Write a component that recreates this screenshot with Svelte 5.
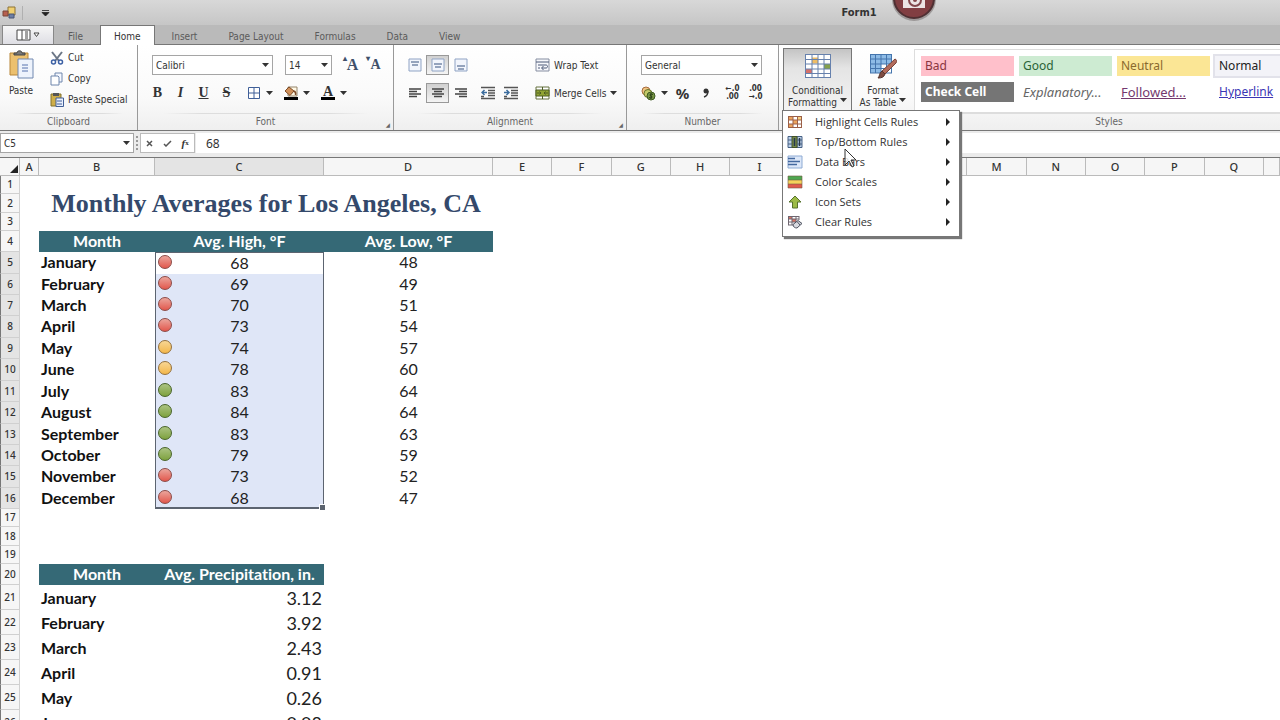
<script lang="ts">
  interface Row {
    n: number;
    h: number;
    kind?: string;
    b?: string;
    c?: string;
    d?: string;
    dot?: string;
  }

  const tabs = ['File', 'Home', 'Insert', 'Page Layout', 'Formulas', 'Data', 'View'];
  const columns = 'ABCDEFGHIJKLMNOPQR'.split('');
  const spare = columns.slice(4);

  const rows: Row[] = [
    { n: 1, h: 18 },
    { n: 2, h: 19, kind: 'title', b: 'Monthly Averages for Los Angeles, CA' },
    { n: 3, h: 18 },
    { n: 4, h: 21, kind: 'head', b: 'Month', c: 'Avg. High, °F', d: 'Avg. Low, °F' },
    { n: 5, h: 22, kind: 'temp', b: 'January', c: '68', d: '48', dot: 'red' },
    { n: 6, h: 21, kind: 'temp', b: 'February', c: '69', d: '49', dot: 'red' },
    { n: 7, h: 21, kind: 'temp', b: 'March', c: '70', d: '51', dot: 'red' },
    { n: 8, h: 22, kind: 'temp', b: 'April', c: '73', d: '54', dot: 'red' },
    { n: 9, h: 21, kind: 'temp', b: 'May', c: '74', d: '57', dot: 'yellow' },
    { n: 10, h: 22, kind: 'temp', b: 'June', c: '78', d: '60', dot: 'yellow' },
    { n: 11, h: 21, kind: 'temp', b: 'July', c: '83', d: '64', dot: 'green' },
    { n: 12, h: 22, kind: 'temp', b: 'August', c: '84', d: '64', dot: 'green' },
    { n: 13, h: 21, kind: 'temp', b: 'September', c: '83', d: '63', dot: 'green' },
    { n: 14, h: 21, kind: 'temp', b: 'October', c: '79', d: '59', dot: 'green' },
    { n: 15, h: 22, kind: 'temp', b: 'November', c: '73', d: '52', dot: 'red' },
    { n: 16, h: 21, kind: 'temp', b: 'December', c: '68', d: '47', dot: 'red' },
    { n: 17, h: 18 },
    { n: 18, h: 19 },
    { n: 19, h: 18 },
    { n: 20, h: 21, kind: 'head', b: 'Month', c: 'Avg. Precipitation, in.' },
    { n: 21, h: 25, kind: 'rain', b: 'January', c: '3.12' },
    { n: 22, h: 25, kind: 'rain', b: 'February', c: '3.92' },
    { n: 23, h: 25, kind: 'rain', b: 'March', c: '2.43' },
    { n: 24, h: 25, kind: 'rain', b: 'April', c: '0.91' },
    { n: 25, h: 25, kind: 'rain', b: 'May', c: '0.26' },
    { n: 26, h: 25, kind: 'rain', b: 'June', c: '0.08' }
  ];

  const menu = ['Highlight Cells Rules', 'Top/Bottom Rules', 'Data Bars', 'Color Scales', 'Icon Sets', 'Clear Rules'];
  const styles = [
    ['Bad', 'bad'], ['Good', 'good'], ['Neutral', 'neutral'], ['Normal', 'normal'],
    ['Check Cell', 'check'], ['Explanatory...', 'explain'], ['Followed...', 'followed'], ['Hyperlink', 'link']
  ];

  let activeTab = $state('Home');
  let menuOpen = $state(true);
  let fontName = $state('Calibri');
  let fontSize = $state('14');
  let format = $state('General');
  let cellName = $state('C5');
  let formula = $state('68');
</script>

{#snippet arrow()}
  <svg class="arrow" width="7" height="4" viewBox="0 0 7 4"><path d="M0 0h7L3.500 4z" fill="#333" /></svg>
{/snippet}

{#snippet lines(kind: string)}
  <svg width="14" height="14" viewBox="0 0 14 14">
    {#if kind === 'left'}
      <path d="M1 3h12M1 5.500h8M1 8h12M1 10.500h8" stroke="#444" stroke-width="1.500" />
    {:else if kind === 'center'}
      <path d="M1 3h12M3 5.500h8M1 8h12M3 10.500h8" stroke="#444" stroke-width="1.500" />
    {:else if kind === 'right'}
      <path d="M1 3h12M5 5.500h8M1 8h12M5 10.500h8" stroke="#444" stroke-width="1.500" />
    {:else}
      <path d="M0 1.500h14M7 4.500h7M7 7h7M7 9.500h7M0 12.500h14M0 10.500h3" stroke="#555" stroke-width="1.500" />
      <path d={kind === 'outdent' ? 'M6 6.500H1M3.500 4L1 6.500L3.500 9' : 'M0 6.500h5M2.500 4L5 6.500L2.500 9'} stroke="#3c6d9e" stroke-width="1.500" fill="none" />
    {/if}
  </svg>
{/snippet}

{#snippet valign(y: number)}
  <svg width="14" height="14" viewBox="0 0 14 14">
    <path d="M1 1h12v12H1z" fill="#f2f5fc" stroke="#8fa3c4" />
    <path d="M3 {y}h8M4 {y + 3}h6" stroke="#39527e" />
  </svg>
{/snippet}

{#snippet menuIcon(i: number)}
  <svg width="16" height="14" viewBox="0 0 16 14">
    {#if i === 0}
      <path d="M1 1h14v12H1z" fill="#fff" />
      <path d="M1 1h5v4H1zM6 5h5v4H6zM1 9h5v4H1z" fill="#eda45c" />
      <path d="M11 1h4v4h-4z" fill="#f7cf7d" />
      <path d="M1 1.500h14M1 5h14M1 9h14M1 12.500h14M1.500 1v12M6 1v12M10.500 1v12M14.500 1v12" stroke="#9b6048" />
    {:else if i === 1}
      <path d="M1 1.500h5v11H1zM10 1.500h5v11h-5z" fill="#bdd0e8" stroke="#466084" />
      <path d="M5 1.500h5v11H5z" fill="#74884b" stroke="#435329" />
      <path d="M1 5h4M1 9h4M10 5h5M10 9h5" stroke="#466084" />
      <path d="M7.500 3v8M12.500 3v8" stroke="#26384f" stroke-width="1.500" />
    {:else if i === 2}
      <path d="M1 1h14v12H1z" fill="#dce7f8" stroke="#8eabd4" />
      <path d="M1 3.500h7M1 6.500h12M1 9.500h9" stroke="#44699f" stroke-width="1.500" />
    {:else if i === 3}
      <path d="M1 1h14v4H1z" fill="#4ea750" />
      <path d="M1 5h14v4H1z" fill="#f5d35a" />
      <path d="M1 9h14v4H1z" fill="#e05a4c" />
      <path d="M1 1h14v12H1zM1 5h14M1 9h14" stroke="#735d45" fill="none" stroke-width=".6" />
    {:else if i === 4}
      <path d="M8 1l6 6h-3.500v6h-5V7H2z" fill="#9dbb46" stroke="#56722c" />
    {:else}
      <path d="M1 1h11v9H1z" fill="#fff" />
      <path d="M1 1h4v3H1zM5 4h4v3H5z" fill="#db7362" />
      <path d="M1 1.500h11M1 4h11M1 7h8M1 10h6M1.500 1v9M5 1v9M9 1v6M12 1v4" stroke="#6f6670" />
      <path d="M6 9.500l5-4 4 3-5 4.500c-2 0-4-1-4-3.500z" fill="#d8d9df" stroke="#4e5260" />
      <path d="M10 6.500l3 3.500" stroke="#4e5260" />
    {/if}
  </svg>
{/snippet}

<div class="window">
  <header class="title-bar">
    <div class="quick">
      <svg width="14" height="14" viewBox="0 0 14 14">
        <path d="M6 1h7v8H6z" fill="#f1d071" stroke="#8d7334" />
        <path d="M1 5h5v5H1z" fill="#b7604f" stroke="#7b4638" />
        <path d="M7 8h5v4H7z" fill="#6d7fa6" stroke="#4b5674" />
      </svg>
      <span class="quick-line"></span>
      <svg width="9" height="6" viewBox="0 0 9 6"><path d="M1 .5h7M1 2.500h7L4.500 6z" fill="#222" stroke="#222" stroke-width=".8" /></svg>
    </div>
    <h1>Form1</h1>
    <svg class="camera" width="46" height="22" viewBox="0 0 46 22">
      <circle cx="23" cy="-1" r="22" fill="#6d6565" opacity=".5" />
      <circle cx="23" cy="-2" r="20" fill="#813e42" stroke="#4f3033" stroke-width="2" />
      <path d="M12-3h22v11H12z" fill="#ece4e4" />
      <circle cx="24" cy="0" r="6" fill="#ece4e4" stroke="#82484c" stroke-width="2" />
      <circle cx="24" cy="0" r="2" fill="#82484c" />
    </svg>
  </header>

  <nav class="tabs">
    <button class="app-btn" aria-label="Application menu">
      <svg width="24" height="12" viewBox="0 0 24 12">
        <path d="M1 1h13v10H1zM6 1v10" fill="#fff" stroke="#444" />
        <path d="M9 3h3M9 5h3M9 7h3M9 9h3" stroke="#444" />
        <path d="M18 4h5l-2.500 3.500z" fill="#fff" stroke="#444" />
      </svg>
    </button>
    {#each tabs as tab}
      <button class="tab" class:active={tab === activeTab} onclick={() => (activeTab = tab)}>{tab}</button>
    {/each}
  </nav>

  <div class="ribbon">
    <!-- Clipboard -->
    <section class="group clipboard">
      <div class="content">
        <button class="big paste">
          <svg width="26" height="30" viewBox="0 0 26 30">
            <path d="M2 3h18v22H2z" fill="#ecc06e" stroke="#b88638" />
            <path d="M6 5h11V3h-3c0-3-5-3-5 0H6z" fill="#777" stroke="#444" />
            <path d="M10 9h15v19H10z" fill="#eef3fc" stroke="#7088b0" />
            <path d="M14 15h6M14 18h6M14 21h6" stroke="#5672ae" />
          </svg>
          <span>Paste</span>
        </button>
        <div class="stack">
          <button class="tool">
            <svg width="14" height="14" viewBox="0 0 14 14">
              <path d="M2 1l7 9M12 1L5 10" stroke="#6b7686" stroke-width="2" />
              <circle cx="3.500" cy="11" r="2" fill="#fff" stroke="#3c60a4" stroke-width="1.500" />
              <circle cx="10.500" cy="11" r="2" fill="#fff" stroke="#3c60a4" stroke-width="1.500" />
            </svg>
            Cut
          </button>
          <button class="tool">
            <svg width="14" height="14" viewBox="0 0 14 14">
              <path d="M5 1h7v9H5z" fill="#f5f8ff" stroke="#6e86ac" />
              <path d="M1 4h7l1 1v8H1z" fill="#fff" stroke="#6e86ac" />
            </svg>
            Copy
          </button>
          <button class="tool">
            <svg width="14" height="14" viewBox="0 0 14 14">
              <path d="M1 1h10v12H1z" fill="#cfae49" stroke="#82722f" />
              <path d="M3 0h6v3H3z" fill="#555" />
              <path d="M6 5h7.500v8.500H6z" fill="#e8effd" stroke="#405e96" />
              <path d="M7 8h5M7 11h5" stroke="#405e96" />
            </svg>
            Paste Special
          </button>
        </div>
      </div>
      <div class="caption">Clipboard</div>
    </section>

    <!-- Font -->
    <section class="group font">
      <div class="content rows">
        <div class="line">
          <div class="pick wide">
            <select aria-label="Font" bind:value={fontName}><option>Calibri</option><option>Cambria</option></select>
            {@render arrow()}
          </div>
          <div class="pick small">
            <select aria-label="Font size" bind:value={fontSize}><option>14</option><option>16</option></select>
            {@render arrow()}
          </div>
          <button class="icon-btn grow" aria-label="Increase font size"><sup>▴</sup>A</button>
          <button class="icon-btn grow shrink" aria-label="Decrease font size"><sup>▾</sup>A</button>
        </div>
        <div class="line letters">
          <button class="icon-btn letter"><b>B</b></button>
          <button class="icon-btn letter"><i>I</i></button>
          <button class="icon-btn letter"><u>U</u></button>
          <button class="icon-btn letter"><s>S</s></button>
          <button class="split borders" aria-label="Borders">
            <svg width="14" height="14" viewBox="0 0 14 14"><path d="M1.500 1.500h11v11h-11zM7 1v12M1 7h12" fill="#fff" stroke="#3f5f98" /></svg>
            {@render arrow()}
          </button>
          <button class="split" aria-label="Fill color">
            <svg width="14" height="14" viewBox="0 0 14 14">
              <path d="M4 1h9v9H4z" fill="#fff8e5" stroke="#94856c" />
              <path d="M1 5l4-4 5 4-4 4.500z" fill="#d0905a" stroke="#7d4c28" />
              <path d="M10 5c2 1 2 2 1.500 4" fill="none" stroke="#7d4c28" stroke-width="1.500" />
              <path d="M0 11h14v3H0z" fill="#000" />
            </svg>
            {@render arrow()}
          </button>
          <button class="split color" aria-label="Font color"><span>A</span>{@render arrow()}</button>
        </div>
      </div>
      <div class="caption">Font<span class="launcher">◢</span></div>
    </section>

    <!-- Alignment -->
    <section class="group alignment">
      <div class="content rows">
        <div class="line">
          <button class="icon-btn" aria-label="Top align">{@render valign(4)}</button>
          <button class="icon-btn pressed" aria-label="Middle align">{@render valign(6)}</button>
          <button class="icon-btn" aria-label="Bottom align">{@render valign(8)}</button>
        </div>
        <div class="line">
          <button class="icon-btn" aria-label="Align left">{@render lines('left')}</button>
          <button class="icon-btn pressed" aria-label="Center">{@render lines('center')}</button>
          <button class="icon-btn" aria-label="Align right">{@render lines('right')}</button>
          <button class="icon-btn indent" aria-label="Decrease indent">{@render lines('outdent')}</button>
          <button class="icon-btn" aria-label="Increase indent">{@render lines('indent')}</button>
        </div>
      </div>
      <div class="content rows wrap">
        <button class="tool">
          <svg width="15" height="14" viewBox="0 0 15 14">
            <path d="M1 1h13v12H1z" fill="#f7f8fc" stroke="#858da0" />
            <path d="M1 4h13M3 7h8c2 0 2 3 0 3H7M3 10h2M8.500 8L6.500 10l2 2" fill="none" stroke="#4b5876" />
          </svg>
          Wrap Text
        </button>
        <button class="tool">
          <svg width="15" height="14" viewBox="0 0 15 14">
            <path d="M1 1h13v12H1z" fill="#fff" stroke="#65703e" />
            <path d="M1 4h13v6H1z" fill="#91a434" stroke="#4c5c22" />
            <path d="M7.500 1v3M7.500 10v3M2 7h4M4.500 5.500L6 7l-1.500 1.500M13 7H9M10.500 5.500L9 7l1.500 1.500" fill="none" stroke="#4c5c22" />
          </svg>
          Merge Cells {@render arrow()}
        </button>
      </div>
      <div class="caption">Alignment<span class="launcher">◢</span></div>
    </section>

    <!-- Number -->
    <section class="group number">
      <div class="content rows">
        <div class="line">
          <div class="pick wide">
            <select aria-label="Number format" bind:value={format}><option>General</option><option>Currency</option></select>
            {@render arrow()}
          </div>
        </div>
        <div class="line">
          <button class="split money" aria-label="Accounting format">
            <svg width="15" height="15" viewBox="0 0 15 15">
              <circle cx="5" cy="5" r="4" fill="#f0c483" stroke="#a66c3d" />
              <circle cx="7" cy="7.500" r="4" fill="#c3ca69" stroke="#68732c" />
              <circle cx="10" cy="10" r="4" fill="#779544" stroke="#3c5921" />
              <path d="M12 8.500c-3-1.500-4 1-2 1.500s1 3-2 1.500M10 7v6" fill="none" stroke="#263d17" />
            </svg>
            {@render arrow()}
          </button>
          <button class="icon-btn percent">%</button>
          <button class="icon-btn" aria-label="Comma style">
            <svg width="6" height="10" viewBox="0 0 6 10">
              <circle cx="3" cy="3" r="2.500" fill="#333" />
              <path d="M5 3c0 3-1 5-4 6" fill="none" stroke="#333" stroke-width="1.500" />
            </svg>
          </button>
          <button class="icon-btn decimal" aria-label="Increase decimal"><span>←.0</span><span>.00</span></button>
          <button class="icon-btn decimal" aria-label="Decrease decimal"><span>.00</span><span>→.0</span></button>
        </div>
      </div>
      <div class="caption">Number</div>
    </section>

    <!-- Styles -->
    <section class="group styles">
      <div class="content">
        <button class="big cond" class:open={menuOpen} onclick={() => (menuOpen = !menuOpen)}>
          <svg width="28" height="26" viewBox="0 0 28 26">
            <path d="M1 1h26v23H1z" fill="#fff" />
            <path d="M8 4.500h6v6H8z" fill="#efbd65" />
            <path d="M20 11h7v5h-7z" fill="#85a04c" />
            <path d="M1 16h7v5H1z" fill="#d5716a" />
            <path d="M1 1.500h26M1 6.500h26M1 11h26M1 16h26M1 20.500h26M1 24.500h26M1.500 1v23M8 1v23M14 1v23M20 1v23M26.500 1v23" stroke="#6681ad" />
          </svg>
          <span>Conditional</span>
          <span>Formatting {@render arrow()}</span>
        </button>
        <button class="big table-btn">
          <svg width="28" height="26" viewBox="0 0 28 26">
            <path d="M1 1h22v19H1z" fill="#8dbbe6" />
            <path d="M12 11h11v9H12z" fill="#fff" />
            <path d="M1 1.500h22M1 6h22M1 11h22M1 15.500h22M1 20h22M1.500 1v19M6.500 1v19M12 1v19M17.500 1v19M22.500 1v19" stroke="#4475ad" />
            <path d="M26 6c2 1 2 2 1 4L16 21l-3-3z" fill="#b26b5c" stroke="#774338" />
            <path d="M13 18l3 3c-1 3-3 4-7 4 2-2 1-5 4-7z" fill="#7e4c42" stroke="#54342f" />
          </svg>
          <span>Format</span>
          <span>As Table {@render arrow()}</span>
        </button>
        <div class="gallery">
          {#each styles as [label, name]}
            <button class="style {name}">{label}</button>
          {/each}
        </div>
      </div>
      <div class="caption">Styles</div>
      {#if menuOpen}
        <div class="menu" role="menu">
          {#each menu as item, i}
            <button class="menu-item" role="menuitem">
              {@render menuIcon(i)}
              <span>{item}</span>
              <svg width="4" height="8" viewBox="0 0 4 8"><path d="M0 0l4 4-4 4z" fill="#222" /></svg>
            </button>
          {/each}
          <svg class="cursor" width="14" height="21" viewBox="0 0 14 21">
            <path d="M1 1v16l4-4 3 6 2-1-3-6h5z" fill="#fff" fill-opacity=".8" stroke="#333" />
          </svg>
        </div>
      {/if}
    </section>
  </div>

  <div class="formula-bar">
    <div class="pick name-box">
      <input type="text" aria-label="Cell name" bind:value={cellName} />
      {@render arrow()}
    </div>
    <span class="grip"></span>
    <div class="edit-btns">
      <button aria-label="Cancel"><svg width="7" height="7" viewBox="0 0 7 7"><path d="M1 1l5 5M6 1L1 6" stroke="#555" stroke-width="1.500" /></svg></button>
      <button aria-label="Enter"><svg width="9" height="7" viewBox="0 0 9 7"><path d="M1 4l2 2 5-5" fill="none" stroke="#555" stroke-width="1.500" /></svg></button>
      <button class="fx" aria-label="Insert function"><i>f</i><small>x</small></button>
    </div>
    <input class="formula" type="text" aria-label="Formula" bind:value={formula} />
  </div>

  <main class="sheet">
    <table>
      <colgroup>
        <col class="w-num" /><col class="w-a" /><col class="w-b" /><col class="w-c" /><col class="w-c" />
        {#each spare as name}
          <col class:w-last={name === 'R'} />
        {/each}
      </colgroup>
      <thead>
        <tr>
          <th class="corner"><svg width="8" height="8" viewBox="0 0 8 8"><path d="M8 0v8H0z" fill="#222" /></svg></th>
          {#each columns as name}
            <th class:picked={name === 'C'}>{name === 'R' ? '' : name}</th>
          {/each}
        </tr>
      </thead>
      <tbody>
        {#each rows as row}
          <tr class={row.kind} style="height: {row.h}px">
            <th class:picked={row.kind === 'temp'}>{row.n}</th>
            <td></td>
            {#if row.kind === 'title'}
              <td class="sheet-title" colspan="3">{row.b}</td>
            {:else}
              <td class="b">{row.b}</td>
              <td class="c" class:first={row.n === 5} class:last={row.n === 16}>
                {#if row.dot}<span class="dot {row.dot}"></span>{/if}{row.c}
                {#if row.n === 16}<span class="handle"></span>{/if}
              </td>
              <td class="d" class:filled={row.d}>{row.d}</td>
            {/if}
            <td colspan={spare.length}></td>
          </tr>
        {/each}
      </tbody>
    </table>
  </main>
</div>

<style>
:global(body) {
  margin: 0;
  overflow: hidden;
}

.window {
  height: 100vh;
  display: flex;
  flex-direction: column;
  overflow: hidden;
  background: #fff;
  font-family: 'DejaVu Sans Condensed', 'DejaVu Sans', sans-serif;
  font-size: 10px;
  color: #333;
}

.window * {
  box-sizing: border-box;
}

svg {
  flex: none;
  display: block;
}

button {
  font: inherit;
  color: inherit;
  border: 0;
  padding: 0;
  background: none;
  white-space: nowrap;
}

/* Title and tabs */
.title-bar {
  position: relative;
  flex: none;
  height: 25px;
  display: flex;
  align-items: center;
  background: linear-gradient(#d8d8d8, #c6c6c6);
}

.quick {
  display: flex;
  align-items: center;
  gap: 6px;
  width: 50px;
  padding-left: 2px;
}

.quick-line {
  width: 1px;
  height: 14px;
  background: #b0b0b0;
  margin-right: 12px;
}

.title-bar h1 {
  flex: 1;
  margin: 0 0 0 388px;
  text-align: center;
  font-size: 11px;
  line-height: 25px;
}

.camera {
  position: absolute;
  left: 891px;
  top: 0;
  z-index: 2;
}

.tabs {
  flex: none;
  display: flex;
  height: 20px;
  gap: 3px;
  padding-left: 2px;
  background: #bababa;
  border-bottom: 1px solid #777;
}

.app-btn {
  width: 52px;
  display: flex;
  align-items: center;
  justify-content: center;
  background: linear-gradient(#f6f6f6, #dedee4);
  border: 1px solid #888;
  border-bottom: 0;
  margin-right: -3px;
}

.tab {
  padding: 2px 14px 0;
  line-height: 20px;
  color: #5a5a5a;
}

.tab.active {
  margin-bottom: -1px;
  padding: 1px 13px 0;
  background: #fff;
  color: #333;
  border: 1px solid #777;
  border-bottom: 0;
}

/* Ribbon */
.ribbon {
  flex: none;
  display: flex;
  height: 86px;
  background: linear-gradient(#fff, #fafafa 60%, #efefef);
  border-bottom: 1px solid #777;
}

.group {
  flex: none;
  position: relative;
  display: grid;
  grid-template-rows: 68px 17px;
  border-right: 1px solid #999;
}

.content {
  display: flex;
  min-width: 0;
}

.rows {
  flex-direction: column;
  padding-top: 6px;
  gap: 0;
}

.line {
  display: flex;
  align-items: center;
  height: 28px;
}

.caption {
  grid-column: 1 / -1;
  position: relative;
  text-align: center;
  line-height: 17px;
  color: #666;
  background: linear-gradient(90deg, transparent 10%, #ddd 25%, #ddd 75%, transparent 90%) top / 100% 1px no-repeat;
}

.launcher {
  position: absolute;
  right: 3px;
  bottom: 0;
  font-size: 6px;
  line-height: 10px;
}

.clipboard {
  width: 138px;
}

.big {
  display: flex;
  flex-direction: column;
  align-items: center;
  line-height: 12px;
}

.big span {
  display: flex;
  align-items: center;
  gap: 3px;
}

.paste {
  width: 42px;
  padding-top: 5px;
  gap: 5px;
}

.stack {
  padding: 2px 0 0 8px;
}

.tool {
  display: flex;
  align-items: center;
  gap: 4px;
  height: 21px;
}

.font {
  width: 256px;
}

.font .rows {
  padding-left: 14px;
}

.pick {
  position: relative;
  height: 20px;
}

.pick select,
.pick input {
  appearance: none;
  display: block;
  width: 100%;
  height: 100%;
  margin: 0;
  padding: 0 3px;
  border: 1px solid #a5a5a5;
  border-radius: 0;
  background: #fff;
  font: inherit;
  color: #333;
}

.pick .arrow {
  position: absolute;
  right: 4px;
  top: 8px;
}

.wide {
  width: 121px;
}

.small {
  width: 47px;
  margin: 0 7px 0 12px;
}

.icon-btn {
  width: 23px;
  height: 20px;
  display: flex;
  align-items: center;
  justify-content: center;
}

.grow {
  font: bold 16px 'Liberation Serif', serif;
  color: #40506a;
}

.grow sup {
  font-size: 8px;
  line-height: 8px;
  align-self: flex-start;
}

.shrink {
  font-size: 14px;
}

.letter {
  font: bold 14px 'Liberation Serif', serif;
}

.letters {
  margin-left: -6px;
}

.split {
  display: flex;
  align-items: center;
  gap: 5px;
  width: 37px;
}

.borders {
  margin-left: 9px;
}

.color span {
  width: 14px;
  height: 14px;
  font: bold 14px/12px 'Liberation Serif', serif;
  border-bottom: 3px solid #000;
}

.alignment {
  width: 233px;
  grid-template-columns: 141px 1fr;
}

.alignment .rows {
  padding-left: 9px;
}

.alignment .wrap {
  padding-left: 0;
}

.wrap .tool {
  height: 28px;
}

.pressed {
  border: 1px solid #999;
  background: linear-gradient(#d0d0d0, #f4f4f4);
}

.indent {
  margin-left: 4px;
}

.number {
  width: 152px;
}

.number .rows {
  padding-left: 14px;
}

.money {
  width: 30px;
}

.percent {
  font: bold 15px/20px 'Noto Sans', sans-serif;
}

.decimal {
  flex-direction: column;
  font: bold 8px/8px 'DejaVu Sans Condensed', sans-serif;
}

.number .decimal:nth-last-child(2) {
  margin-left: 4px;
}

.styles {
  width: 660px;
  border-right: 0;
}

.cond {
  width: 69px;
  margin: 3px 0 0 4px;
  padding-top: 4px;
  border: 1px solid transparent;
}

.cond.open {
  border-color: #777;
  background: linear-gradient(#c4c4c4, #e4e4e4 30%, #f4f4f4);
}

.big.cond svg:first-child,
.big.table-btn svg:first-child {
  margin-bottom: 6px;
}

.big span svg:first-child {
  margin-bottom: 0;
}

.table-btn {
  width: 54px;
  margin: 3px 4px 0 4px;
  padding-top: 4px;
  border: 1px solid transparent;
}

.gallery {
  flex: 1;
  display: grid;
  grid-template-columns: repeat(4, 93px);
  grid-template-rows: 20px 20px;
  gap: 6px 5px;
  margin-top: 4px;
  padding: 6px;
  background: #fff;
  border: 1px solid #ddd;
  border-right: 0;
}

.style {
  padding: 0 4px;
  text-align: left;
  font: 12px/20px 'Noto Sans', sans-serif;
}

.bad {
  background: #ffc0cb;
  color: #8a3540;
}

.good {
  background: #cdebd2;
  color: #2b6338;
}

.neutral {
  background: #fbe695;
  color: #8a6a2e;
}

.normal {
  background: #f3f3f8;
  outline: 2px solid #e2e2ea;
  color: #222;
}

.check {
  background: #757575;
  color: #fff;
  font-weight: bold;
}

.explain {
  font-size: 13px;
  font-style: italic;
  color: #666;
}

.followed {
  font-size: 13px;
  color: #74386f;
  text-decoration: underline;
}

.link {
  color: #3a35b5;
  text-decoration: underline;
}

/* Drop-down of the conditional formatting button */
.menu {
  position: absolute;
  left: 3px;
  top: 65px;
  z-index: 5;
  width: 178px;
  padding: 1px 0 4px;
  background: #fff;
  border: 1px solid #777;
  box-shadow: 2px 2px 1px #777;
}

.menu-item {
  display: flex;
  align-items: center;
  width: 100%;
  height: 20px;
  padding: 0 9px 0 4px;
  gap: 12px;
  font: 11px/20px 'Open Sans', sans-serif;
}

.menu-item span {
  flex: 1;
  text-align: left;
}

.cursor {
  position: absolute;
  left: 61px;
  top: 37px;
}

/* Formula bar */
.formula-bar {
  flex: none;
  display: flex;
  height: 26px;
  padding: 2px 0 4px;
  background: #ebebeb;
}

.name-box {
  width: 134px;
}

.grip {
  width: 3px;
  margin: 3px 1px 3px 2px;
  border-left: 2px dotted #999;
}

.edit-btns {
  display: flex;
  width: 55px;
  background: #fff;
  border: 1px solid #bbb;
}

.edit-btns button {
  flex: 1;
  display: flex;
  align-items: center;
  justify-content: center;
}

.fx {
  font: bold 11px 'Liberation Serif', serif;
}

.fx small {
  font-size: 7px;
}

.formula {
  flex: 1;
  margin-left: 1px;
  padding: 0 10px;
  border: 0;
  font: 12px 'Noto Sans', sans-serif;
  color: #333;
}

/* Sheet */
.sheet {
  flex: 1;
  min-height: 0;
  overflow: hidden;
  border-top: 1px solid #777;
}

table {
  width: 100%;
  table-layout: fixed;
  border-collapse: separate;
  border-spacing: 0;
}

.w-num {
  width: 20px;
}

.w-a {
  width: 19px;
}

.w-b {
  width: 116px;
}

.w-c {
  width: 169px;
}

.w-last {
  width: 16px;
}

th {
  padding: 0;
  background: #f6f6f6;
  border-right: 1px solid #bbb;
  border-bottom: 1px solid #bbb;
  font: 500 11px/17px 'Noto Sans', sans-serif;
  color: #333;
}

thead th {
  height: 18px;
}

tbody th {
  border-color: #d0d0d0;
  border-left: 1px solid #777;
  font-size: 10px;
}

th.picked {
  background: #e4e4e4;
}

.corner svg {
  margin: 4px 0 0 10px;
}

td {
  padding: 0 0 2px;
  font: 16px/18px Lato, sans-serif;
  font-variant-ligatures: none;
  color: #222;
  white-space: nowrap;
}

.sheet-title {
  padding: 0;
  text-align: center;
  font: bold 26px/18px 'Liberation Serif', serif;
  color: #34496b;
}

.head .b,
.head .c,
.head .filled {
  background: #356976;
  color: #fff;
  font-weight: bold;
  text-align: center;
}

.temp .b,
.rain .b {
  padding-left: 2px;
  font-weight: bold;
  color: #111;
}

.rain .b {
  padding-bottom: 0;
}

.temp .c {
  position: relative;
  text-align: center;
  background: #dfe6f7;
  border-left: 1px solid #5c6470;
  border-right: 1px solid #5c6470;
}

.temp .c.first {
  background: #fff;
  border-top: 1px solid #5c6470;
}

.temp .c.last {
  padding-bottom: 0;
  border-bottom: 2px solid #5c6470;
}

.temp .d {
  text-align: center;
}

.rain .c {
  padding-right: 2px;
  padding-bottom: 0;
  text-align: right;
  font-size: 18px;
}

.dot {
  position: absolute;
  left: 2px;
  top: 2px;
  width: 14px;
  height: 14px;
  border-radius: 50%;
  border: 1px solid;
}

.red {
  border-color: #8c4a46;
  background: linear-gradient(#eba59c, #e2584d);
}

.yellow {
  border-color: #94713c;
  background: linear-gradient(#f8d694, #f3b74b);
}

.green {
  border-color: #486428;
  background: linear-gradient(#abc382, #7ea23f);
}

.handle {
  position: absolute;
  right: -3px;
  bottom: -4px;
  width: 5px;
  height: 5px;
  background: #5c6470;
  border: 1px solid #fff;
  box-sizing: content-box;
}
</style>
